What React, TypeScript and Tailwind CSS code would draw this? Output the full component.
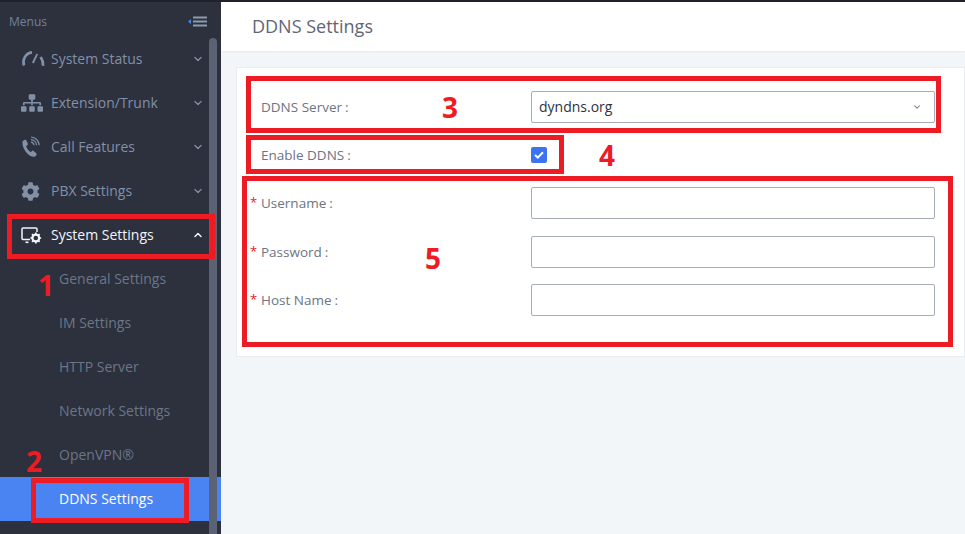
import { ChevronDown, ChevronUp } from "lucide-react";
import { FaCog, FaSitemap } from "react-icons/fa";

const font = "font-['Open_Sans','Liberation_Sans',sans-serif]";

function GaugeIcon() {
  return (
    <svg width="24" height="20" viewBox="0 0 24 20" fill="none" aria-hidden>
      <path d="M3 16.5C1 11 4.5 4 11 3.4" stroke="currentColor" strokeWidth="2.6" />
      <path d="M15.5 4.5L11 13.5L12.8 14.5L17 5.2Z" fill="currentColor" />
      <path d="M19.5 8C21.5 10.5 22.3 13.5 22 16.8" stroke="currentColor" strokeWidth="2.6" />
    </svg>
  );
}

function PhoneIcon() {
  return (
    <svg width="20" height="22" viewBox="0 0 20 22" fill="none" aria-hidden>
      <path
        d="M1.5 5.5C2.5 4 4 3.5 5 3.8L7 8C6.7 9 5.6 9.5 5.3 10.3C5.6 12.5 7.6 15 9.6 16C10.4 15.8 11 14.6 12 14.4L15.6 17.4C15.8 18.7 15 20 13.6 20.8C8 21.6 0.5 12.5 1.5 5.5Z"
        fill="currentColor"
      />
      <path d="M10 6.2C11.6 6.4 12.8 7.6 13 9.2" stroke="currentColor" strokeWidth="1.2" />
      <path d="M10 3.6C13 3.8 15.4 6.2 15.6 9.2" stroke="currentColor" strokeWidth="1.2" />
      <path d="M10 1C14.4 1.2 18 4.8 18.2 9.2" stroke="currentColor" strokeWidth="1.2" />
    </svg>
  );
}

function MonitorGearIcon() {
  return (
    <svg width="21" height="17" viewBox="0 0 21 17" fill="none" aria-hidden>
      <path d="M9 12.5H2C1.2 12.5 1 12 1 11.5V2C1 1.3 1.4 1 2 1H15C15.7 1 16 1.4 16 2V5" stroke="currentColor" strokeWidth="1.5" />
      <rect x="4.5" y="14.5" width="3" height="1.6" fill="currentColor" />
      <circle cx="14.8" cy="11" r="3.4" stroke="currentColor" strokeWidth="2.2" />
      <path d="M14.8 5.6V7.2M14.8 14.8V16.4M9.4 11H11M18.6 11H20.2M11 7.2L12.1 8.3M17.5 13.7L18.6 14.8M11 14.8L12.1 13.7M17.5 8.3L18.6 7.2" stroke="currentColor" strokeWidth="1.7" />
    </svg>
  );
}

function CollapseIcon() {
  return (
    <svg width="20" height="11" viewBox="0 0 20 11" aria-hidden>
      <path d="M0 5.5L3 3V8Z" fill="#4a84f2" />
      <rect x="5" y="0.5" width="14" height="2" fill="#8d9bb0" />
      <rect x="5" y="4.5" width="14" height="2" fill="#8d9bb0" />
      <rect x="5" y="8.5" width="14" height="2" fill="#8d9bb0" />
    </svg>
  );
}

const menus = [
  { label: "System Status", icon: <GaugeIcon /> },
  { label: "Extension/Trunk", icon: <FaSitemap size={22} /> },
  { label: "Call Features", icon: <PhoneIcon /> },
  { label: "PBX Settings", icon: <FaCog size={19} /> },
];

const subMenus = ["General Settings", "IM Settings", "HTTP Server", "Network Settings", "OpenVPN®"];

function MenuRow({ label, icon, open }: { label: string; icon: React.ReactNode; open?: boolean }) {
  return (
    <div className={`flex h-11 items-center pl-[21px] pr-[17px] ${open ? "text-[#f2f5f9]" : "text-[#8091a8]"}`}>
      <span className="flex w-[30px] shrink-0 items-center">{icon}</span>
      <span className="flex-1 text-sm">{label}</span>
      {open ? (
        <ChevronUp size={12} strokeWidth={3} className="-translate-x-[0px]" />
      ) : (
        <ChevronDown size={12} strokeWidth={2.5} />
      )}
    </div>
  );
}

function Sidebar() {
  return (
    <aside className="relative w-[221px] shrink-0 overflow-hidden bg-[#2d303d]">
      <div className="flex h-[35px] items-center justify-between pl-[9px] pr-[13px] pt-[4px]">
        <span className="text-[12px] text-[#6f83a0]">Menus</span>
        <CollapseIcon />
      </div>
      <MenuRow label="System Status" icon={menus[0].icon} />
      <MenuRow label="Extension/Trunk" icon={menus[1].icon} />
      <MenuRow label="Call Features" icon={menus[2].icon} />
      <MenuRow label="PBX Settings" icon={menus[3].icon} />
      <MenuRow label="System Settings" icon={<MonitorGearIcon />} open />
      {subMenus.map((s) => (
        <div key={s} className="flex h-11 items-center pl-[59px] text-sm text-[#6b7789]">
          {s}
        </div>
      ))}
      <div className="flex h-11 items-center bg-[#4a84f2] pl-[59px] text-sm text-white">DDNS Settings</div>
      {/* scrollbar thumb */}
      <div className="absolute bottom-0 left-[209px] top-[36px] w-2 rounded-t bg-[#5a6274]" />
    </aside>
  );
}

function Field({ label, required, children, className }: { label: string; required?: boolean; children: React.ReactNode; className: string }) {
  return (
    <div className={`flex h-8 items-center ${className}`}>
      <div className="flex w-[294px] shrink-0 items-center text-[13.5px] text-[#6c7484]">
        <span className="w-[24px] pl-[13px] text-[13px] text-[#ed1c24]">{required ? "*" : ""}</span>
        <span>{label}</span>
        <span className="ml-[3px]">:</span>
      </div>
      {children}
    </div>
  );
}

function TextBox() {
  return <input type="text" className="h-8 w-[404px] rounded-[2px] border border-[#a6adb9] bg-white outline-none" />;
}

function Mark({ className, children }: { className: string; children?: React.ReactNode }) {
  return <div className={`absolute border-[5px] border-[#ed1c24] ${className}`}>{children}</div>;
}

function Num({ className, children }: { className: string; children: React.ReactNode }) {
  return <span className={`absolute text-[28px] font-bold leading-none text-[#ed1c24] ${className}`}>{children}</span>;
}

export default function App() {
  return (
    <div className={`relative flex h-[534px] w-[965px] flex-col overflow-hidden bg-[#f3f6f9] ${font}`}>
      <div className="h-[2px] bg-[#20222b]" />
      <div className="flex min-h-0 flex-1">
        <Sidebar />
        <main className="min-w-0 flex-1">
          <header className="flex h-[49px] items-center bg-white pl-[31px] text-[18px] text-[#5f6675] shadow-[0_1px_2px_rgba(0,0,0,0.05)]">
            DDNS Settings
          </header>
          <section className="ml-[15px] mt-4 h-[290px] border border-[#e9edf2] bg-white pt-[23px]">
            <Field label="DDNS Server" className="mb-4">
              <div className="flex h-8 w-[404px] items-center justify-between rounded-[2px] border border-[#a6adb9] pl-[7px] pr-[12px] text-sm text-[#2d3340]">
                dyndns.org
                <ChevronDown size={10} strokeWidth={2.5} className="text-[#6c7484]" />
              </div>
            </Field>
            <Field label="Enable DDNS" className="mb-4">
              <span className="flex h-4 w-4 items-center justify-center rounded-[2px] bg-[#3b73f0]">
                <svg width="10" height="8" viewBox="0 0 10 8" fill="none" aria-hidden>
                  <path d="M1 4L3.8 6.6L9 1.2" stroke="white" strokeWidth="2" />
                </svg>
              </span>
            </Field>
            <Field label="Username" required className="mb-[17px]">
              <TextBox />
            </Field>
            <Field label="Password" required className="mb-4">
              <TextBox />
            </Field>
            <Field label="Host Name" required className="">
              <TextBox />
            </Field>
          </section>
        </main>
      </div>

      {/* red annotations drawn over the screenshot */}
      <Mark className="left-[7px] top-[214px] h-[45px] w-[208px]" />
      <Mark className="left-[31px] top-[478px] h-[45px] w-[158px]" />
      <Mark className="left-[246px] top-[76px] h-[57px] w-[695px]" />
      <Mark className="left-[246px] top-[135px] h-[39px] w-[318px]" />
      <Mark className="left-[242px] top-[176px] h-[171px] w-[711px]" />
      <Num className="left-[38px] top-[271px]">1</Num>
      <Num className="left-[26px] top-[447px]">2</Num>
      <Num className="left-[442px] top-[93px]">3</Num>
      <Num className="left-[599px] top-[141px]">4</Num>
      <Num className="left-[425px] top-[244px]">5</Num>
    </div>
  );
}
